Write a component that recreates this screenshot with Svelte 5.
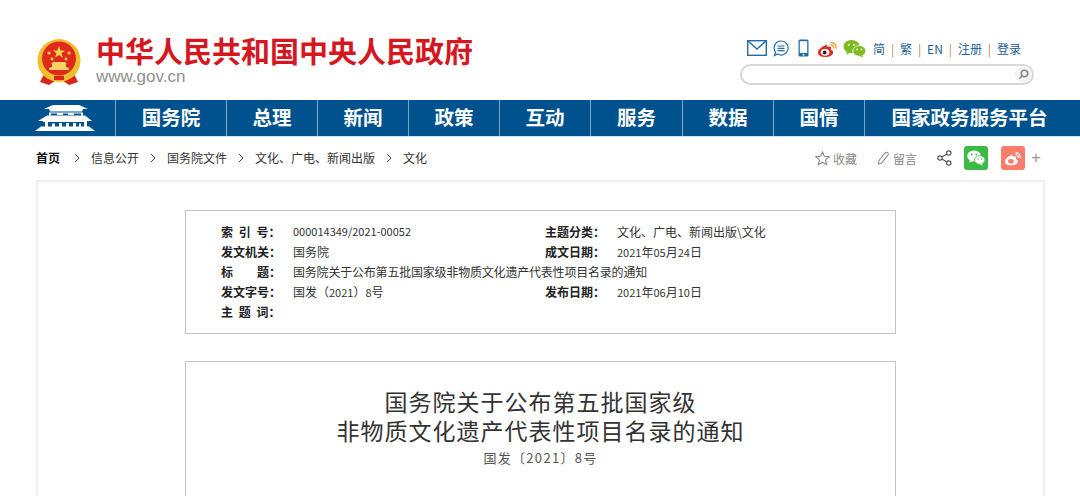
<script lang="ts">
  const tools = ['简', '繁', 'EN', '注册', '登录'];
  const nav = [
    { label: '国务院', w: 111 }, { label: '总理', w: 91 }, { label: '新闻', w: 91 }, { label: '政策', w: 91 },
    { label: '互动', w: 91 }, { label: '服务', w: 92 }, { label: '数据', w: 91 }, { label: '国情', w: 91 },
    { label: '国家政务服务平台', w: 216 },
  ];
  const crumbs = ['信息公开', '国务院文件', '文化、广电、新闻出版', '文化'];
</script>

<div class="page">
  <header class="top">
    <div class="brand">
      <svg class="emblem" width="44" height="46" viewBox="0 0 44 46">
        <path d="M8 33 L3 43 L12 46 L19 41 L25 41 L32 46 L41 43 L36 33 Z" fill="#d8261c" />
        <circle cx="22" cy="21.500" r="21.500" fill="#f0bd2c" />
        <circle cx="22" cy="19.500" r="17" fill="#de2a1c" />
        <path d="M22 7 l1.600 4.400 4.600 .1 -3.700 2.800 1.400 4.500 -3.900 -2.700 -3.900 2.700 1.400 -4.500 -3.700 -2.800 4.600 -.1 Z" fill="#f8d24a" />
        <circle cx="12" cy="14" r="1.600" fill="#f8d24a" />
        <circle cx="32" cy="14" r="1.600" fill="#f8d24a" />
        <circle cx="15" cy="20" r="1.400" fill="#f8d24a" />
        <circle cx="29" cy="20" r="1.400" fill="#f8d24a" />
        <path d="M12 31 h20 v-2 l-3 -1 v-3 h1 l-2 -2 h-12 l-2 2 h1 v3 l-3 1 Z" fill="#f6d364" />
        <path d="M5 32 Q22 43 39 32 L37 37 Q22 45 7 37 Z" fill="#f0bd2c" />
        <path d="M17 37 h10 v4 h-10 Z" fill="#d8261c" />
      </svg>
      <div class="brand-text">
        <div class="site-name">中华人民共和国中央人民政府</div>
        <div class="site-url">www.gov.cn</div>
      </div>
    </div>
    <div class="tools">
      <div class="tool-row">
        <svg class="i-mail" width="20" height="16" viewBox="0 0 20 16" fill="none" stroke="#1f6ca8" stroke-width="1.400">
          <rect x="0.700" y="0.700" width="18.600" height="14.600" />
          <path d="M1 1 L10 9 L19 1" />
        </svg>
        <svg class="i-chat" width="16" height="17" viewBox="0 0 16 17" fill="none" stroke="#1f6ca8" stroke-width="1.200">
          <path d="M8 1 a7 7 0 1 1 -3.500 13 L1.500 15.500 L2.400 12 A7 7 0 0 1 8 1 Z" />
          <path d="M4.500 6 h7 M4.500 8.300 h7 M4.500 10.600 h7" />
        </svg>
        <svg class="i-phone" width="11" height="18" viewBox="0 0 11 18">
          <rect x="0.500" y="0.500" width="10" height="17" rx="1.500" fill="#1f6ca8" />
          <rect x="1.800" y="2.200" width="7.400" height="11.800" fill="#fff" />
          <circle cx="5.500" cy="15.800" r="0.900" fill="#fff" />
        </svg>
        <svg class="i-weibo" width="21" height="19" viewBox="0 0 22 19">
          <path d="M9 6 C4 8 1 11 1 14 C1 17 5 18.500 9 18.500 C14 18.500 17 16 17 13.500 C17 11.500 15 11 14.500 10.700 C15.500 8 14 7 11 7.700 C10.500 7.900 10 7.500 10.500 6 C10.500 4.800 10 5.400 9 6 Z" fill="#dd2c22" />
          <ellipse cx="8.500" cy="13.500" rx="4.500" ry="3.500" fill="#fff" />
          <circle cx="8" cy="13.700" r="2" fill="#222" />
          <path d="M14 3 a6 6 0 0 1 6 7 M14 5.500 a3.500 3.500 0 0 1 3.500 4" fill="none" stroke="#ef9a2c" stroke-width="1.400" />
        </svg>
        <svg class="i-wechat" width="23" height="19" viewBox="0 0 24 19">
          <ellipse cx="9" cy="7.500" rx="8.500" ry="7" fill="#7dbb1f" />
          <path d="M4 12 L3.500 16 L8 13.500 Z" fill="#7dbb1f" />
          <ellipse cx="17" cy="12" rx="6.800" ry="5.600" fill="#7dbb1f" stroke="#fff" stroke-width="0.800" />
          <path d="M20 16 L21 19 L17 17 Z" fill="#7dbb1f" />
          <circle cx="6" cy="5.500" r="1" fill="#fff" /><circle cx="11.500" cy="5.500" r="1" fill="#fff" />
          <circle cx="14.800" cy="10.500" r="0.900" fill="#fff" /><circle cx="19.300" cy="10.500" r="0.900" fill="#fff" />
        </svg>
        <div class="links">
          {#each tools as t, i}
            {#if i > 0}<span class="sep">|</span>{/if}
            <span>{t}</span>
          {/each}
        </div>
      </div>
      <div class="search">
        <span class="search-btn">
          <svg width="11" height="11" viewBox="0 0 11 11" fill="none" stroke="#8a8a8a" stroke-width="1.600">
            <circle cx="6.500" cy="4.500" r="3.200" />
            <path d="M4.200 6.800 L1.200 9.800" />
          </svg>
        </span>
      </div>
    </div>
  </header>

  <nav class="nav">
    <div class="nav-logo">
      <svg width="60" height="26" viewBox="0 0 60 26" fill="#fff">
        <path d="M18 0 h26 l9 4 h-5 l-1 2.500 h-32 l-1 -2.500 h-5 Z" />
        <path d="M14 7.500 h34 v1 h-34 Z M14 8 h2 v2.500 h-2 Z M46 8 h2 v2.500 h-2 Z M22 8.500 h6 v1.500 h-6 Z M33 8.500 h6 v1.500 h-6 Z" />
        <path d="M12 10.500 h38 l7 5.500 h-5 v1 h-44 v-1 h-5 Z" />
        <path d="M10 17 h3 v5 h-3 Z M49 17 h3 v5 h-3 Z M17 18.500 h3 v3.500 h-3 Z M24 18 h3 v4 h-3 Z M31 18 h3 v4 h-3 Z M38 18 h3 v4 h-3 Z M44 18.500 h2 v3.500 h-2 Z" />
        <path d="M6 21.500 h48 l6 4.500 h-60 Z" />
      </svg>
    </div>
    {#each nav as n}
      <a class="nav-item" style="width:{n.w}px">{n.label}</a>
    {/each}
  </nav>

  <div class="crumbs">
    <div class="trail">
      <b>首页</b>
      {#each crumbs as c}
        <svg class="chev" width="6" height="10" viewBox="0 0 6 10" fill="none" stroke="#444" stroke-width="1"><path d="M1 1 L5 5 L1 9" /></svg>
        <span>{c}</span>
      {/each}
    </div>
    <div class="actions">
      <span class="act">
        <svg width="15" height="15" viewBox="0 0 15 15" fill="none" stroke="#888" stroke-width="1.100"><path d="M7.500 1 L9.400 5.300 14 5.800 10.600 8.900 11.600 13.600 7.500 11.200 3.400 13.600 4.400 8.900 1 5.800 5.600 5.300 Z" /></svg>
        收藏
      </span>
      <span class="act">
        <svg width="13" height="14" viewBox="0 0 13 14" fill="none" stroke="#888" stroke-width="1.100"><path d="M2 9.500 L8.500 1.500 Q10 0.800 11 2 Q11.800 3 11 4 L4.500 12 L1.500 13 Z" /></svg>
        留言
      </span>
      <svg class="share" width="15" height="16" viewBox="0 0 15 16" fill="none" stroke="#555" stroke-width="1.200">
        <circle cx="11.800" cy="3" r="2.200" /><circle cx="3" cy="8" r="2.200" /><circle cx="11.800" cy="13" r="2.200" />
        <path d="M5 7 L9.800 4 M5 9 L9.800 12" />
      </svg>
      <span class="badge wx">
        <svg width="18" height="16" viewBox="0 0 18 16" fill="#fff">
          <ellipse cx="7" cy="6" rx="6.800" ry="5.600" />
          <path d="M3 9.500 L2.500 12.800 L6 10.800 Z" />
          <ellipse cx="12.800" cy="10" rx="5.200" ry="4.300" stroke="#3cba46" stroke-width="0.800" />
          <path d="M15 13.500 L15.800 15.800 L12.800 14.300 Z" />
          <circle cx="4.800" cy="4.500" r="0.900" fill="#3cba46" /><circle cx="9.200" cy="4.500" r="0.900" fill="#3cba46" />
          <circle cx="11.200" cy="9" r="0.700" fill="#3cba46" /><circle cx="14.600" cy="9" r="0.700" fill="#3cba46" />
        </svg>
      </span>
      <span class="badge wb">
        <svg width="18" height="16" viewBox="0 0 22 19">
          <path d="M9 6 C4 8 1 11 1 14 C1 17 5 18.500 9 18.500 C14 18.500 17 16 17 13.500 C17 11.500 15 11 14.500 10.700 C15.500 8 14 7 11 7.700 C10.500 7.900 10 7.500 10.500 6 C10.500 4.800 10 5.400 9 6 Z" fill="#fff" />
          <ellipse cx="8.500" cy="13.500" rx="3.500" ry="2.800" fill="#fa7d6c" />
          <path d="M14 3 a6 6 0 0 1 6 7 M14 5.500 a3.500 3.500 0 0 1 3.500 4" fill="none" stroke="#fff" stroke-width="1.500" />
        </svg>
      </span>
      <span class="plus">+</span>
    </div>
  </div>

  <main class="sheet">
    <section class="meta">
      <div class="meta-grid">
        <div class="cell"><b class="k sp">索 引 号：</b><span class="num">000014349/2021-00052</span></div>
        <div class="cell"><b class="k">主题分类：</b><span>文化、广电、新闻出版\文化</span></div>
        <div class="cell"><b class="k">发文机关：</b><span>国务院</span></div>
        <div class="cell"><b class="k">成文日期：</b><span><span class="num">2021</span>年<span class="num">05</span>月<span class="num">24</span>日</span></div>
        <div class="cell wide"><b class="k">标　　题：</b><span class="tight">国务院关于公布第五批国家级非物质文化遗产代表性项目名录的通知</span></div>
        <div class="cell"><b class="k">发文字号：</b><span>国发（<span class="num">2021</span>）<span class="num">8</span>号</span></div>
        <div class="cell"><b class="k">发布日期：</b><span><span class="num">2021</span>年<span class="num">06</span>月<span class="num">10</span>日</span></div>
        <div class="cell wide"><b class="k sp">主 题 词：</b></div>
      </div>
    </section>
    <article class="doc">
      <h1>国务院关于公布第五批国家级<br />非物质文化遗产代表性项目名录的通知</h1>
      <p class="docno">国发〔2021〕8号</p>
    </article>
  </main>
</div>

<style>
  :global(body) {
    margin: 0;
    background: #fff;
    overflow: hidden;
  }
  .page {
    width: 1080px;
    height: 496px;
    overflow: hidden;
    font-family: "Liberation Sans", "Noto Sans CJK SC", sans-serif;
    color: #333;
  }
  .top {
    height: 100px;
    display: flex;
    justify-content: space-between;
    box-sizing: border-box;
    padding: 39px 46px 0 37px;
  }
  .brand {
    display: flex;
    gap: 15px;
  }
  .site-name {
    font-family: "Noto Sans CJK SC", sans-serif;
    font-size: 29px;
    line-height: 28px;
    font-weight: 700;
    color: #d5171f;
    margin-top: -3px;
  }
  .site-url {
    font-size: 17px;
    line-height: 18px;
    color: #8f8f8f;
    margin-top: 4px;
  }
  .tools {
    width: 294px;
    margin-top: -1px;
  }
  .tool-row {
    display: flex;
    align-items: center;
    height: 20px;
    padding-left: 7px;
  }
  .i-chat {
    margin-left: 6px;
  }
  .i-phone {
    margin-left: 9px;
  }
  .i-weibo {
    margin-left: 8px;
  }
  .i-wechat {
    margin-left: 5px;
  }
  .links {
    display: flex;
    gap: 5.900px;
    font-size: 12px;
    color: #1d5f94;
    margin-left: 7px;
    font-family: "Noto Sans CJK SC", sans-serif;
  }
  .sep {
    color: #b98a4a;
  }
  .search {
    margin-top: 6px;
    height: 21px;
    box-sizing: border-box;
    border: 2px solid #d8d8d8;
    border-radius: 11px;
    display: flex;
    justify-content: flex-end;
    align-items: center;
  }
  .search-btn {
    width: 17px;
    height: 17px;
    background: #f3f3f3;
    border-radius: 50%;
    display: flex;
    align-items: center;
    justify-content: center;
  }
  .nav {
    height: 36px;
    display: flex;
    background: #00528f;
    box-shadow: 0 1px 0 #cfe0ec;
  }
  .nav-logo {
    width: 115px;
    display: flex;
    align-items: center;
    box-sizing: border-box;
    padding-left: 35px;
  }
  .nav-item {
    box-sizing: border-box;
    border-left: 1px solid #7fa8c7;
    display: flex;
    align-items: center;
    justify-content: center;
    padding-bottom: 3px;
    color: #fff;
    font-size: 19.500px;
    font-weight: 700;
    font-family: "Noto Sans CJK SC", sans-serif;
  }
  .nav-item:last-child {
    padding-right: 6px;
  }
  .crumbs {
    height: 44px;
    display: flex;
    justify-content: space-between;
    align-items: center;
    padding: 0 36px;
    font-size: 12px;
    font-family: "Noto Sans CJK SC", sans-serif;
  }
  .trail {
    display: flex;
    align-items: center;
    gap: 10px;
    color: #333;
    padding-bottom: 2px;
  }
  .trail b {
    color: #111;
    margin-right: 3px;
  }
  .chev {
    margin: 2px 1px 0;
  }
  .actions {
    display: flex;
    align-items: center;
    color: #888;
  }
  .act {
    display: flex;
    align-items: center;
    gap: 3px;
    margin-right: 20px;
  }
  .share {
    margin-right: 12px;
  }
  .badge {
    width: 24px;
    height: 24px;
    border-radius: 3px;
    display: flex;
    align-items: center;
    justify-content: center;
    margin-right: 13px;
  }
  .wx {
    background: #3cba46;
  }
  .wb {
    background: #fa7d6c;
    margin-right: 6px;
  }
  .plus {
    font-size: 17px;
    color: #999;
    margin-right: 3px;
    font-family: "Liberation Sans", sans-serif;
  }
  .sheet {
    margin: 0 35px 0 36px;
    box-sizing: border-box;
    border: 2px solid #f0f0f0;
    border-bottom: 0;
    height: 320px;
    padding: 28px 147px 0;
  }
  .meta {
    height: 124px;
    box-sizing: border-box;
    border: 1px solid #c4c4c4;
    padding: 11px 0 0 35px;
  }
  .meta-grid {
    display: grid;
    grid-template-columns: 324px 1fr;
    font-size: 12px;
    line-height: 19.600px;
    color: #333;
    font-family: "Noto Sans CJK SC", sans-serif;
  }
  .cell {
    display: flex;
    white-space: nowrap;
  }
  .wide {
    grid-column: 1 / -1;
  }
  .k {
    width: 72px;
    flex: 0 0 72px;
    color: #222;
  }
  .sp {
    word-spacing: 3px;
  }
  .num {
    font-size: 11px;
  }
  .tight {
    letter-spacing: -0.200px;
  }
  .doc {
    margin-top: 27px;
    height: 140px;
    box-sizing: border-box;
    border: 1px solid #c4c4c4;
    border-bottom: 0;
    text-align: center;
    padding-top: 25px;
  }
  h1 {
    margin: 0;
    font-family: "Noto Sans CJK SC", sans-serif;
    font-weight: 400;
    font-size: 23px;
    line-height: 28.500px;
    letter-spacing: 1px;
    color: #333;
  }
  .docno {
    margin: 4px 0 0;
    font-size: 13px;
    line-height: 19px;
    letter-spacing: 1.300px;
    color: #555;
    font-family: "Noto Sans CJK SC", sans-serif;
  }
</style>
